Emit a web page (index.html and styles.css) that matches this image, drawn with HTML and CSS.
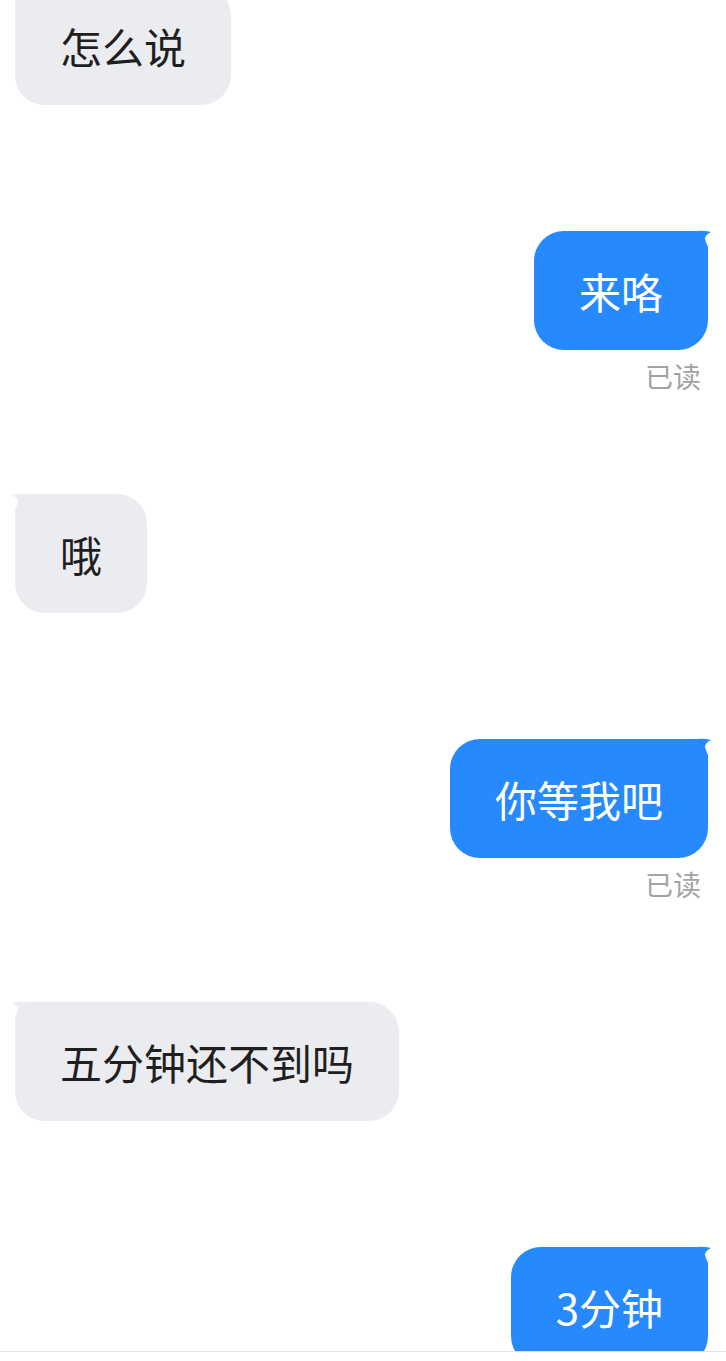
FILE: index.html
```html
<!DOCTYPE html>
<html lang="zh-CN">
<head>
    <meta charset="UTF-8">
    <meta name="viewport" content="width=device-width, initial-scale=1.0">
    <title>聊天</title>
    <link rel="stylesheet" href="styles.css">
</head>
<body>

    <!-- Message list -->
    <div class="chat">
        <div class="chat-list">

            <div class="row received">
                <div class="bubble">怎么说
                    <svg class="tail" viewBox="0 0 34 32"><path d="M0 2 L18 2 Q26 1 33 3 Q27 6 27 10 Q28 14 30 18 L30 32 L0 32 Z"/></svg>
                </div>
            </div>

            <div class="row sent">
                <div class="bubble">来咯
                    <svg class="tail" viewBox="0 0 34 32"><path d="M0 2 L18 2 Q26 1 33 3 Q27 6 27 10 Q28 14 30 18 L30 32 L0 32 Z"/></svg>
                </div>
                <div class="receipt">已读</div>
            </div>

            <div class="row received">
                <div class="bubble">哦
                    <svg class="tail" viewBox="0 0 34 32"><path d="M0 2 L18 2 Q26 1 33 3 Q27 6 27 10 Q28 14 30 18 L30 32 L0 32 Z"/></svg>
                </div>
            </div>

            <div class="row sent">
                <div class="bubble">你等我吧
                    <svg class="tail" viewBox="0 0 34 32"><path d="M0 2 L18 2 Q26 1 33 3 Q27 6 27 10 Q28 14 30 18 L30 32 L0 32 Z"/></svg>
                </div>
                <div class="receipt">已读</div>
            </div>

            <div class="row received">
                <div class="bubble">五分钟还不到吗
                    <svg class="tail" viewBox="0 0 34 32"><path d="M0 2 L18 2 Q26 1 33 3 Q27 6 27 10 Q28 14 30 18 L30 32 L0 32 Z"/></svg>
                </div>
            </div>

            <div class="row sent">
                <div class="bubble">3分钟
                    <svg class="tail" viewBox="0 0 34 32"><path d="M0 2 L18 2 Q26 1 33 3 Q27 6 27 10 Q28 14 30 18 L30 32 L0 32 Z"/></svg>
                </div>
            </div>

        </div>
    </div>

    <!-- Bottom bar edge -->
    <div class="footer"></div>

</body>
</html>
```

FILE: styles.css
```css
body {
    font-family: "Noto Sans CJK SC", "Noto Sans", sans-serif;
    background-color: #fff;
    margin: 0;
    height: 100vh;
    display: flex;
    flex-direction: column;
}
.chat {
    flex-grow: 1;
    overflow: hidden;
}
.chat-list {
    display: flex;
    flex-direction: column;
    margin-top: -14px;
}
.row {
    display: flex;
    flex-direction: column;
}
.row.received {
    align-items: flex-start;
    padding-left: 15px;
    margin-bottom: 126px;
}
.row.sent {
    align-items: flex-end;
    padding-right: 18px;
    margin-bottom: 102px;
}
/* Bubbles */
.bubble {
    position: relative;
    height: 119px;
    line-height: 119px;
    padding: 0 45px;
    font-size: 42px;
    border-radius: 30px;
    white-space: nowrap;
}
.received .bubble {
    background-color: #ebecf0;
    color: #1f1f1f;
}
.sent .bubble {
    background-color: #2689fe;
    color: #fff;
}
.tail {
    position: absolute;
    top: -2px;
    width: 34px;
    height: 32px;
}
.sent .tail {
    right: -4px;
    fill: #2689fe;
}
.received .tail {
    left: -4px;
    fill: #ebecf0;
    transform: scaleX(-1);
}
.receipt {
    margin-top: 10px;
    margin-right: 7px;
    font-size: 28px;
    line-height: 32px;
    color: #a3a3a3;
}
.footer {
    height: 10px;
    border-top: 1px solid #e3e3e3;
    background-color: #fff;
}
```
